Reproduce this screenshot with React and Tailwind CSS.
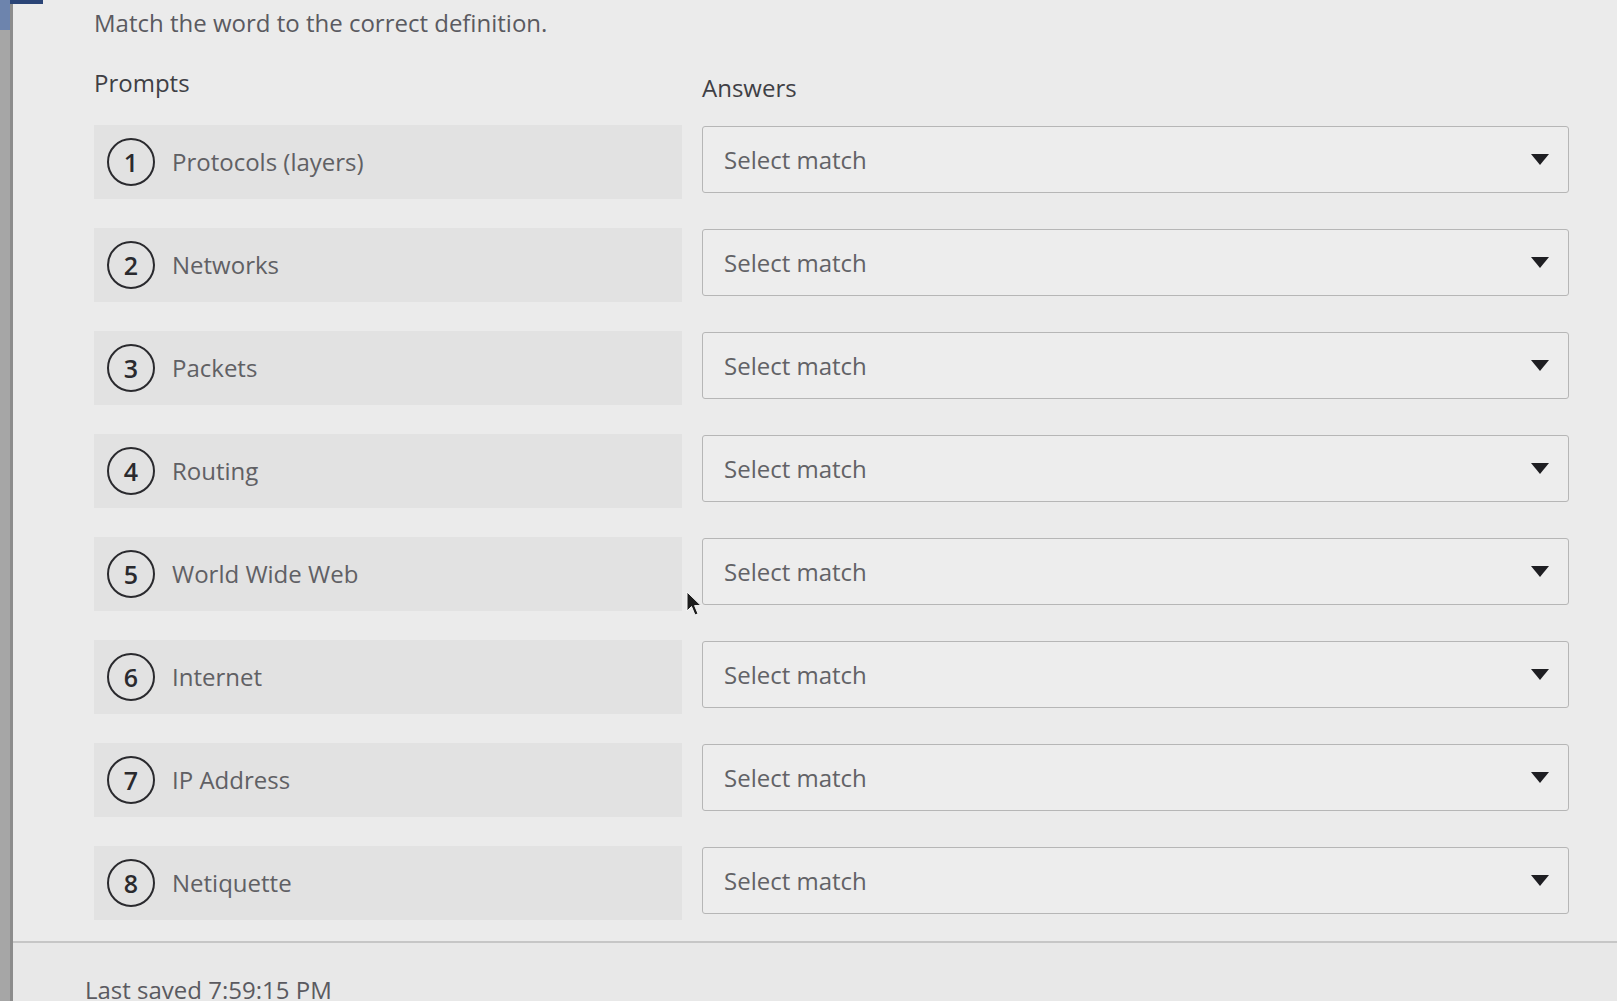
import React from "react";

const prompts = [
  "Protocols (layers)",
  "Networks",
  "Packets",
  "Routing",
  "World Wide Web",
  "Internet",
  "IP Address",
  "Netiquette",
];

function Row({ n, label }) {
  return (
    <>
      <div className="h-[74px] bg-[#e2e2e2] flex items-center pl-[13px]">
        <div className="w-[48px] h-[48px] rounded-full border-2 border-[#2a2a2e] flex items-center justify-center text-[25px] font-semibold text-[#2a2a2e] leading-none shrink-0">
          {n}
        </div>
        <span className="ml-[17px] text-[24px] text-[#606064] leading-none">{label}</span>
      </div>
      <div className="pt-[1px]">
        <div className="h-[67px] border-[1.5px] border-[#b6b6b6] rounded-[3px] bg-[#ededed] flex items-center justify-between pl-[21px] pr-[18px]">
          <span className="text-[24px] text-[#626266] leading-none">Select match</span>
          <svg width="20" height="13" viewBox="0 0 20 13">
            <polygon points="1,1 19,1 10,12" fill="#1e1e22" />
          </svg>
        </div>
      </div>
    </>
  );
}

export default function App() {
  return (
    <div
      className="w-[1617px] h-[1001px] overflow-hidden flex bg-[#ebebeb] relative"
      style={{ fontFamily: '"Open Sans", "Noto Sans", sans-serif' }}
    >
      <div className="w-[13px] shrink-0 bg-[#a6a6a6] border-r-[3px] border-[#8c8c8c] relative">
        <div className="absolute left-0 top-0 w-[43px] h-[4px] bg-[#2a4476]" />
        <div className="absolute left-0 top-0 w-[10px] h-[30px] bg-[#6d84ad]" />
      </div>
      <div className="flex-1 flex flex-col">
        <div className="pl-[81px] pr-[49px]">
          <div className="pt-[8px] h-[38px] text-[24px] leading-[30px] text-[#5a5a60]">
            Match the word to the correct definition.
          </div>
          <div className="grid grid-cols-[588px_867px] gap-x-[20px] gap-y-[29px] mt-[30px]">
            <div className="text-[24px] leading-[30px] font-medium text-[#3f3f45] mb-[-7px]">Prompts</div>
            <div className="text-[24px] leading-[30px] font-medium text-[#3f3f45] pt-[5px] mb-[-7px]">Answers</div>
            {prompts.map((p, i) => (
              <Row key={p} n={i + 1} label={p} />
            ))}
          </div>
        </div>
        <div className="mt-[21px] border-t-2 border-[#c6c6c6] bg-[#e8e8e8] flex-1 pl-[72px] pt-[32px]">
          <div className="text-[24px] leading-[30px] text-[#5a5a60]">Last saved 7:59:15 PM</div>
        </div>
      </div>
      <svg
        className="absolute left-[686px] top-[591px]"
        width="18"
        height="26"
        viewBox="0 0 18 26"
      >
        <path d="M1 1 L1 20 L5.5 15.5 L9 24 L12 22.8 L8.6 14.6 L15 14.6 Z" fill="#1c1c1c" stroke="#f5f5f5" strokeWidth="1" />
      </svg>
    </div>
  );
}
